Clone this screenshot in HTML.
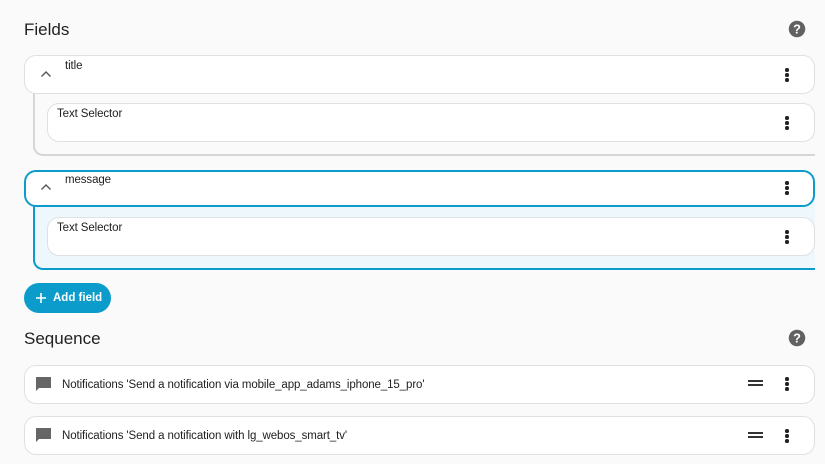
<!DOCTYPE html>
<html><head><style>
body{margin:0;width:825px;height:464px;background:#fafafa;font-family:"Liberation Sans",sans-serif;color:#212121;position:relative;overflow:hidden}
.a{position:absolute;box-sizing:border-box}
.card{background:#fff;border:1px solid #e0e0e0;border-radius:12px}
h2{position:absolute;margin:0;font-weight:400;font-size:17px;left:24px}
.t{position:absolute;font-size:11.5px;letter-spacing:-0.1px}
.dots{position:absolute;width:4px}
.dots i{display:block;width:3.5px;height:3.5px;border-radius:50%;background:#212121;margin-bottom:1.5px}
</style></head><body>
<h2 style="top:20px">Fields</h2>
<svg class="a" style="left:788px;top:20px" width="18" height="18" viewBox="0 0 24 24"><circle cx="12" cy="12" r="11" fill="#616161"/><text x="12" y="18" font-size="17" font-weight="bold" text-anchor="middle" fill="#fff" font-family="Liberation Sans">?</text></svg>

<div class="a" style="left:33px;top:80px;width:782px;height:76px;border-left:2px solid #d6d6d6;border-bottom:2px solid #d6d6d6;border-bottom-left-radius:10px;background:#fafafa"></div>
<div class="a card" style="left:24px;top:55px;width:791px;height:39px"></div>
<svg class="a" style="left:40px;top:69px" width="12" height="10" viewBox="0 0 12 10"><path d="M1.5 7.5L6 3L10.5 7.5" stroke="#555" stroke-width="1.4" fill="none"/></svg>
<div class="t" style="left:65px;top:60px">title</div>
<div class="dots" style="left:785px;top:68px"><i></i><i></i><i></i></div>
<div class="a card" style="left:47px;top:103px;width:768px;height:39px"></div>
<div class="t" style="left:57px;top:108px">Text Selector</div>
<div class="dots" style="left:785px;top:116px"><i></i><i></i><i></i></div>

<div class="a" style="left:33px;top:195px;width:782px;height:75px;border-left:2px solid #0d9bcb;border-bottom:2px solid #0d9bcb;border-bottom-left-radius:10px;background:#eef7fc"></div>
<div class="a card" style="left:24px;top:170px;width:791px;height:37px;border:2px solid #0d9bcb"></div>
<svg class="a" style="left:40px;top:182px" width="12" height="10" viewBox="0 0 12 10"><path d="M1.5 7.5L6 3L10.5 7.5" stroke="#555" stroke-width="1.4" fill="none"/></svg>
<div class="t" style="left:65px;top:174px">message</div>
<div class="dots" style="left:785px;top:181px"><i></i><i></i><i></i></div>
<div class="a card" style="left:47px;top:217px;width:768px;height:39px"></div>
<div class="t" style="left:57px;top:222px">Text Selector</div>
<div class="dots" style="left:785px;top:230px"><i></i><i></i><i></i></div>

<div class="a" style="left:24px;top:283px;width:87px;height:30px;border-radius:15px;background:#0b9ccb;color:#fff;font-size:11.5px;font-weight:bold;line-height:30px;padding-left:29px;white-space:nowrap">Add field</div>
<svg class="a" style="left:35px;top:292px" width="12" height="12" viewBox="0 0 12 12"><path d="M6 1V11M1 6H11" stroke="#fff" stroke-width="1.6"/></svg>

<h2 style="top:329px">Sequence</h2>
<svg class="a" style="left:788px;top:329px" width="18" height="18" viewBox="0 0 24 24"><circle cx="12" cy="12" r="11" fill="#616161"/><text x="12" y="18" font-size="17" font-weight="bold" text-anchor="middle" fill="#fff" font-family="Liberation Sans">?</text></svg>

<div class="a card" style="left:24px;top:365px;width:791px;height:39px"></div>
<svg class="a" style="left:35px;top:376px" width="17" height="17" viewBox="0 0 17 17"><path d="M1 1H16V12H4L1 15Z" fill="#666"/></svg>
<div class="t" style="left:62px;top:379px">Notifications 'Send a notification via mobile_app_adams_iphone_15_pro'</div>
<div class="a" style="left:748px;top:380px;width:15px;height:2px;background:#333"></div>
<div class="a" style="left:748px;top:384px;width:15px;height:2px;background:#333"></div>
<div class="dots" style="left:785px;top:377px"><i></i><i></i><i></i></div>

<div class="a card" style="left:24px;top:416px;width:791px;height:39px"></div>
<svg class="a" style="left:35px;top:427px" width="17" height="17" viewBox="0 0 17 17"><path d="M1 1H16V12H4L1 15Z" fill="#666"/></svg>
<div class="t" style="left:62px;top:430px">Notifications 'Send a notification with lg_webos_smart_tv'</div>
<div class="a" style="left:748px;top:432px;width:15px;height:2px;background:#333"></div>
<div class="a" style="left:748px;top:436px;width:15px;height:2px;background:#333"></div>
<div class="dots" style="left:785px;top:429px"><i></i><i></i><i></i></div>
</body></html>
